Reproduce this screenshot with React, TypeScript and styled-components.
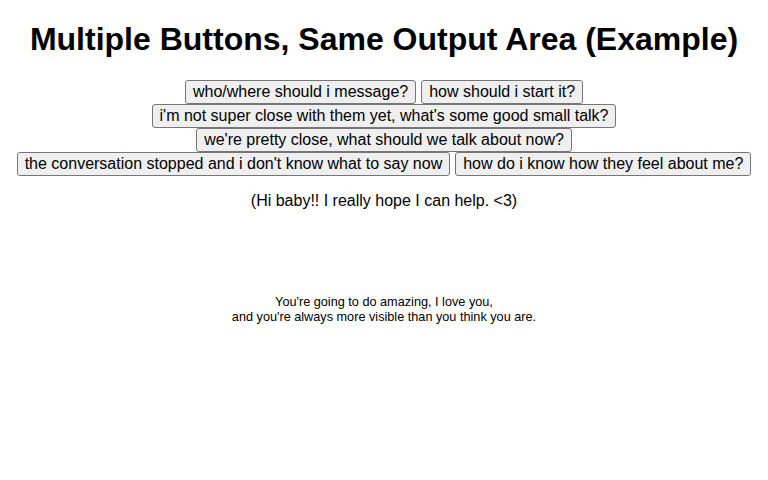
import React from "react";
import styled, { createGlobalStyle } from "styled-components";

const Global = createGlobalStyle`
  html, body { margin: 0; padding: 0; background: #fff; }
  body { margin: 0 8px 8px; font-family: "Liberation Sans", Arial, sans-serif; color: #000; }
`;

const Page = styled.div`
  text-align: center;
  padding-top: 21px;
`;

const Title = styled.h1`
  font-size: 32px;
  font-weight: bold;
  margin: 0 0 22px;
`;

const ButtonRow = styled.div`
  display: flex;
  justify-content: center;
  gap: 5px;
`;

const Btn = styled.button`
  font-family: "Liberation Sans", Arial, sans-serif;
  font-size: 16px;
  height: 24px;
  padding: 1px 7px;
  background: #efefef;
  color: #000;
  border: 1px solid #767676;
  border-radius: 3px;
  line-height: 20px;
`;

const Output = styled.p`
  font-size: 16px;
  margin: 16px 0 0;
`;

const Footer = styled.p`
  font-size: 12.7px;
  line-height: 15px;
  margin: 85px 0 0;
`;

const rows = [
  ["who/where should i message?", "how should i start it?"],
  ["i'm not super close with them yet, what's some good small talk?"],
  ["we're pretty close, what should we talk about now?"],
  ["the conversation stopped and i don't know what to say now", "how do i know how they feel about me?"],
];

export default function App() {
  return (
    <Page>
      <Global />
      <Title>Multiple Buttons, Same Output Area (Example)</Title>
      {rows.map((r, i) => (
        <ButtonRow key={i}>
          {r.map((t) => (
            <Btn key={t}>{t}</Btn>
          ))}
        </ButtonRow>
      ))}
      <Output>(Hi baby!! I really hope I can help. &lt;3)</Output>
      <Footer>
        You're going to do amazing, I love you,
        <br />
        and you're always more visible than you think you are.
      </Footer>
    </Page>
  );
}
